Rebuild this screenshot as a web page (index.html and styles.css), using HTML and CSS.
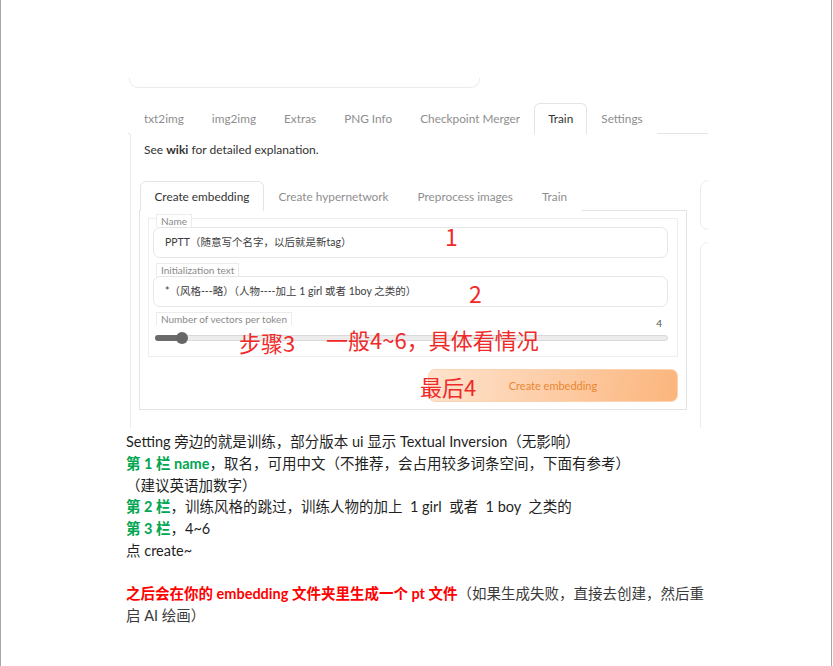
FILE: index.html
```html
<!DOCTYPE html>
<html lang="zh-CN">
<head>
    <meta charset="UTF-8">
    <meta name="viewport" content="width=device-width, initial-scale=1.0">
    <title>Train - Create embedding</title>
    <link rel="stylesheet" href="styles.css">
</head>
<body>
    <div class="page">
        <!-- screenshot of the webui train tab -->
        <div class="shot">
            <div class="topbox"></div>
            <div class="tabs main-tabs">
                <div class="tab">txt2img</div>
                <div class="tab">img2img</div>
                <div class="tab">Extras</div>
                <div class="tab">PNG Info</div>
                <div class="tab">Checkpoint Merger</div>
                <div class="tab active">Train</div>
                <div class="tab">Settings</div>
            </div>
            <div class="tabitem">
                <p class="hint">See <b>wiki</b> for detailed explanation.</p>
                <div class="train-row">
                    <div class="train-left">
                        <div class="tabs sub-tabs">
                            <div class="tab active">Create embedding</div>
                            <div class="tab">Create hypernetwork</div>
                            <div class="tab">Preprocess images</div>
                            <div class="tab">Train</div>
                        </div>
                        <div class="panel">
                            <div class="group">
                                <div class="field">
                                    <span class="label">Name</span>
                                    <div class="input">PPTT（随意写个名字，以后就是新tag）</div>
                                </div>
                                <div class="field">
                                    <span class="label">Initialization text</span>
                                    <div class="input">*（风格---略）（人物----加上 1 girl 或者 1boy 之类的）</div>
                                </div>
                                <div class="field slider-field">
                                    <div class="slider-head">
                                        <span class="label">Number of vectors per token</span>
                                        <span class="value">4</span>
                                    </div>
                                    <div class="track">
                                        <div class="fill"></div>
                                        <div class="thumb"></div>
                                    </div>
                                </div>
                            </div>
                            <div class="actions">
                                <button class="create">Create embedding</button>
                            </div>
                        </div>
                    </div>
                    <div class="train-right">
                        <div class="side-box small"></div>
                        <div class="side-box big"></div>
                    </div>
                </div>
            </div>
            <span class="note n1">1</span>
            <span class="note n2">2</span>
            <span class="note n3">步骤3</span>
            <span class="note n4">一般4~6，具体看情况</span>
            <span class="note n5">最后4</span>
        </div>

        <div class="doc">
            <p>Setting 旁边的就是训练，部分版本 ui 显示 Textual Inversion（无影响）</p>
            <p><span class="green">第 1 栏 name</span>，取名，可用中文（不推荐，会占用较多词条空间，下面有参考）</p>
            <p>（建议英语加数字）</p>
            <p><span class="green">第 2 栏</span>，训练风格的跳过，训练人物的加上&nbsp; 1 girl&nbsp; 或者&nbsp; 1 boy&nbsp; 之类的</p>
            <p><span class="green">第 3 栏</span>，4~6</p>
            <p>点 create~</p>
            <p>&nbsp;</p>
            <p><span class="red">之后会在你的 embedding 文件夹里生成一个 pt 文件</span><span class="muted">（如果生成失败，直接去创建，然后重</span></p>
            <p class="muted">启 AI 绘画）</p>
        </div>
    </div>
</body>
</html>
```

FILE: styles.css
```css
/* Page */
body {
    margin: 0;
    background: #ffffff;
    font-family: 'Lato', 'Noto Sans CJK SC', sans-serif;
}
.page {
    box-sizing: border-box;
    width: 832px;
    min-height: 666px;
    border-left: 1px solid #a8a8a8;
    border-right: 1px solid #a8a8a8;
    padding-top: 78px;
    overflow: hidden;
}

/* Screenshot block */
.shot {
    position: relative;
    margin-left: 127px;
    width: 580px;
    height: 350px;
    overflow: hidden;
}
.topbox {
    width: 349px;
    height: 9px;
    margin-left: 1px;
    border: 1px solid #ebebeb;
    border-top: none;
    border-radius: 0 0 9px 9px;
}
.tabs {
    display: flex;
    border-bottom: 1px solid #e4e4e4;
}
.tab {
    box-sizing: border-box;
    padding: 0 13px;
    border: 1px solid transparent;
    border-bottom: none;
    border-radius: 6px 6px 0 0;
    font-size: 11.8px;
    color: #8e8e8e;
    background: #ffffff;
    white-space: nowrap;
}
.tab.active {
    border-color: #e4e4e4;
    color: #333333;
}
.main-tabs {
    margin-top: 15px;
    height: 30px;
    padding-left: 2px;
}
.main-tabs .tab {
    height: 31px;
    line-height: 30px;
}
.tabitem {
    margin-left: 2px;
    padding: 8px 0 0 8px;
    border-left: 1px solid #ececec;
    height: 300px;
}
.hint {
    margin: 0 0 0 5px;
    font-size: 12px;
    line-height: 16px;
    color: #333333;
}
.train-row {
    display: flex;
    gap: 13px;
    margin-top: 23px;
}
.train-left {
    flex: none;
    width: 548px;
}
.sub-tabs {
    height: 29px;
    padding-left: 1px;
}
.sub-tabs .tab {
    height: 30px;
    line-height: 29px;
    padding: 0 13.5px;
}
.panel {
    border: 1px solid #e4e4e4;
    border-top: none;
    padding: 7px 8px;
}
.group {
    border: 1px solid #eeeeee;
    padding: 0 9px 15px 4px;
}
.field {
    display: flex;
    flex-direction: column;
    align-items: flex-start;
}
.field:first-child {
    margin-top: -5px;
}
.field + .field {
    margin-top: 5px;
}
.slider-field {
    align-items: stretch;
}
.label {
    margin-left: 3px;
    padding: 0 4px;
    border: 1px solid #ececec;
    border-bottom: none;
    font-size: 10px;
    line-height: 12px;
    color: #8a8a8a;
    background: #ffffff;
}
.input {
    box-sizing: border-box;
    width: 515px;
    height: 31px;
    padding-left: 11px;
    border: 1px solid #e6e6e6;
    border-radius: 7px;
    font-size: 10.5px;
    line-height: 29px;
    color: #3c3c3c;
}
.slider-head {
    display: flex;
    justify-content: space-between;
    align-items: flex-start;
}
.value {
    margin: 5px 6px 0 0;
    font-size: 10px;
    line-height: 12px;
    color: #555555;
}
.track {
    position: relative;
    width: 511px;
    height: 4px;
    margin: 6px 0 0 2px;
    border: 1px solid #d9d9d9;
    border-radius: 3px;
    background: #ececec;
}
.fill {
    position: absolute;
    left: -1px;
    top: -1px;
    width: 28px;
    height: 6px;
    border-radius: 3px;
    background: #6b6b6b;
}
.thumb {
    position: absolute;
    left: 20px;
    top: -4px;
    width: 12px;
    height: 12px;
    border-radius: 50%;
    background: #666666;
}
.actions {
    display: flex;
    justify-content: flex-end;
    margin-top: 12px;
}
.create {
    width: 250px;
    height: 33px;
    border: 1px solid #fcd3b0;
    border-radius: 7px;
    background: linear-gradient(100deg, #fee3cd 0%, #fdc89e 60%, #fbb57c 100%);
    font-family: 'Lato', sans-serif;
    font-size: 11px;
    color: #ea8733;
}
.train-right {
    flex: none;
    display: flex;
    flex-direction: column;
    gap: 12px;
    width: 40px;
    margin-top: -1px;
}
.side-box {
    border: 1px solid #ececec;
    border-radius: 8px;
}
.side-box.small {
    height: 48px;
}
.side-box.big {
    height: 220px;
}

/* Red annotations drawn over the screenshot */
.note {
    position: absolute;
    font-family: 'Noto Sans CJK SC', sans-serif;
    font-weight: 400;
    font-size: 22px;
    line-height: 22px;
    color: #ef2a2a;
    white-space: nowrap;
}
.n1 { left: 317px; top: 147px; font-size: 23px; }
.n2 { left: 341px; top: 204px; font-size: 23px; }
.n3 { left: 111px; top: 253px; }
.n4 { left: 198px; top: 250px; }
.n5 { left: 292px; top: 297px; }

/* Document text */
.doc {
    margin: 3px 0 0 125px;
    font-size: 14.5px;
    line-height: 21.75px;
    color: #1f1f1f;
}
.doc p {
    margin: 0;
    white-space: nowrap;
}
.green {
    color: #00a651;
    font-weight: bold;
}
.red {
    color: #ff0000;
    font-weight: bold;
}
.muted {
    color: #3a3a3a;
}
```
